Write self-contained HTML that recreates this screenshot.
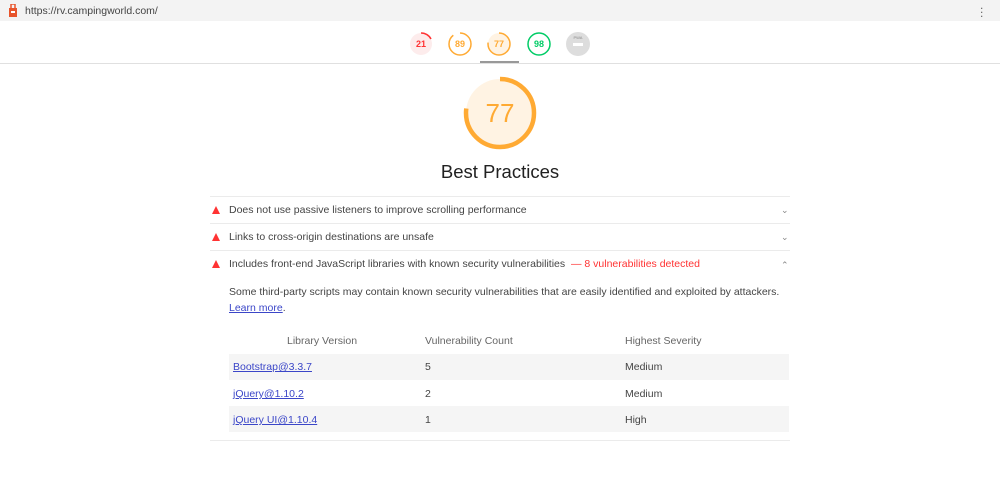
<!DOCTYPE html><html><head><style>
body{margin:0;width:1000px;height:500px;background:#fff;font-family:"Liberation Sans",sans-serif;position:relative;overflow:hidden;color:#212121}
.a{position:absolute}
.t{font-size:10.5px;color:#444}
.line{position:absolute;left:210px;width:580px;height:1px;background:#ebebeb}
.tri{position:absolute;left:212px;width:0;height:0;border-left:4px solid transparent;border-right:4px solid transparent;border-bottom:8px solid #f33}
.chev{position:absolute;left:781px;font-size:9px;color:#888}
a{color:#3b46c8}
</style></head><body>
<div class="a" style="left:0;top:0;width:1000px;height:21px;background:#f3f3f3"></div>
<svg class="a" style="left:8px;top:4px" width="10" height="13"><rect x="1" y="4" width="8" height="9" fill="#e8542c"/><rect x="3" y="0" width="4" height="5" fill="none" stroke="#e8542c" stroke-width="1.5"/><rect x="3" y="7" width="4" height="2" fill="#fff"/></svg>
<div class="a" style="left:25px;top:5px;font-size:10.5px;color:#444">https://rv.campingworld.com/</div>
<div class="a" style="left:980px;top:3px;font-size:12px;color:#666;line-height:4px">.<br>.<br>.</div>
<svg class="a" style="left:0;top:0" width="1000" height="70">
<g font-family="Liberation Sans" font-size="9" text-anchor="middle" font-weight="bold">
<circle cx="421" cy="44" r="11" fill="#fdecec"/><path d="M421 33 A11 11 0 0 1 431 39" stroke="#f33" stroke-width="1.5" fill="none"/><text x="421" y="47" fill="#f33">21</text>
<circle cx="460" cy="44" r="11" fill="#fff"/><circle cx="460" cy="44" r="11" stroke="#fa3" stroke-width="1.5" fill="none" stroke-dasharray="61.5 69" transform="rotate(-90 460 44)"/><text x="460" y="47" fill="#fa3">89</text>
<circle cx="499" cy="44" r="11" fill="#fff3e3"/><circle cx="499" cy="44" r="11" stroke="#fa3" stroke-width="1.5" fill="none" stroke-dasharray="53 69" transform="rotate(-90 499 44)"/><text x="499" y="47" fill="#fa3">77</text>
<circle cx="539" cy="44" r="11" stroke="#0c6" stroke-width="1.5" fill="#fff"/><text x="539" y="47" fill="#0c6">98</text>
<circle cx="578" cy="44" r="12" fill="#ddd"/><rect x="573" y="43" width="10" height="3" fill="#fff"/><text x="578" y="39" font-size="4" fill="#888" font-weight="normal">PWA</text>
</g>
<rect x="0" y="63" width="1000" height="1" fill="#e0e0e0"/>
<rect x="480" y="61" width="39" height="2" fill="#999"/>
</svg>
<svg class="a" style="left:460px;top:73px" width="80" height="80"><circle cx="40" cy="40" r="34" fill="#fff3e3"/><circle cx="40" cy="40" r="34" stroke="#fa3" stroke-width="4.5" fill="none" stroke-dasharray="164.5 214" transform="rotate(-90 40 40)"/><text x="40" y="49" text-anchor="middle" font-family="Liberation Sans" font-size="26" fill="#fa3">77</text></svg>
<div class="a" style="left:0;width:1000px;top:161px;text-align:center;font-size:18.5px;color:#212121">Best Practices</div>
<div class="line" style="top:196px"></div><div class="line" style="top:223px"></div><div class="line" style="top:250px"></div><div class="line" style="top:440px"></div>
<div class="tri" style="top:206px"></div><div class="a t" style="left:229px;top:204px">Does not use passive listeners to improve scrolling performance</div><div class="chev" style="top:205px">⌄</div>
<div class="tri" style="top:233px"></div><div class="a t" style="left:229px;top:231px">Links to cross-origin destinations are unsafe</div><div class="chev" style="top:232px">⌄</div>
<div class="tri" style="top:260px"></div><div class="a t" style="left:229px;top:258px">Includes front-end JavaScript libraries with known security vulnerabilities <span style="color:#f33">&nbsp;— 8 vulnerabilities detected</span></div><div class="chev" style="top:260px">⌃</div>
<div class="a t" style="left:229px;top:284px;line-height:16px;color:#444">Some third-party scripts may contain known security vulnerabilities that are easily identified and exploited by attackers.<br><a href="#">Learn more</a>.</div>
<div class="a" style="left:229px;top:354px;width:560px;height:26px;background:#f5f5f5"></div>
<div class="a" style="left:229px;top:406px;width:560px;height:26px;background:#f5f5f5"></div>
<div class="a t" style="left:287px;top:335px;color:#666">Library Version</div><div class="a t" style="left:425px;top:335px;color:#666">Vulnerability Count</div><div class="a t" style="left:625px;top:335px;color:#666">Highest Severity</div>
<div class="a t" style="left:233px;top:361px"><a href="#">Bootstrap@3.3.7</a></div><div class="a t" style="left:425px;top:361px">5</div><div class="a t" style="left:625px;top:361px">Medium</div>
<div class="a t" style="left:233px;top:388px"><a href="#">jQuery@1.10.2</a></div><div class="a t" style="left:425px;top:388px">2</div><div class="a t" style="left:625px;top:388px">Medium</div>
<div class="a t" style="left:233px;top:414px"><a href="#">jQuery UI@1.10.4</a></div><div class="a t" style="left:425px;top:414px">1</div><div class="a t" style="left:625px;top:414px">High</div>
</body></html>
